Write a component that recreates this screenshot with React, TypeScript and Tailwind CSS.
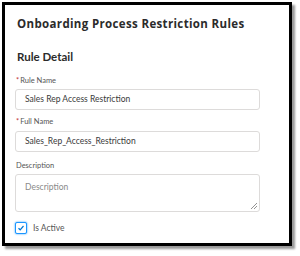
import React from "react";

export default function App() {
  const font = { fontFamily: "Lato, 'Open Sans', sans-serif" };
  const head = { fontFamily: "'Open Sans', Lato, sans-serif" };
  return (
    <div className="w-[300px] h-[256px] bg-white pt-[2px] pl-[2px]" style={font}>
      <div className="w-[290px] h-[244px] border-[3px] border-black bg-white shadow-[3px_3px_2px_#9a9a9a] pl-[10px] flex flex-col">
        <div className="mt-[12px] ml-[2px] h-[14px] leading-[14px] text-[11.5px] tracking-[0.35px] font-bold text-[#2b2b2b] whitespace-nowrap" style={head}>
          Onboarding Process Restriction Rules
        </div>
        <div className="mt-[18px] ml-[2px] h-[16px] leading-[16px] text-[11.5px] font-bold text-[#2b2b2b]">
          Rule Detail
        </div>
        <div className="mt-[11px] ml-[1px] h-[10px] leading-[10px] text-[7.5px] text-[#555]">
          <span className="text-[#c23934] mr-[1px]">*</span>Rule Name
        </div>
        <div className="mt-[3px] w-[245px] h-[21px] border border-[#dddbda] rounded-[3px] pl-[9px] flex items-center text-[8.5px] text-[#3a3a3a]">
          Sales Rep Access Restriction
        </div>
        <div className="mt-[7px] ml-[1px] h-[10px] leading-[10px] text-[7.5px] text-[#555]">
          <span className="text-[#c23934] mr-[1px]">*</span>Full Name
        </div>
        <div className="mt-[4px] w-[245px] h-[21px] border border-[#dddbda] rounded-[3px] pl-[9px] flex items-center text-[8.5px] text-[#3a3a3a]">
          Sales_Rep_Access_Restriction
        </div>
        <div className="mt-[9px] ml-[1px] h-[10px] leading-[10px] text-[7.5px] text-[#555]">
          Description
        </div>
        <div className="relative mt-[3px] w-[245px] h-[38px] border border-[#dddbda] rounded-[3px] pl-[9px] pt-[6px] text-[8.5px] leading-[12px] text-[#8a8a8a]">
          Description
          <svg className="absolute right-[1px] bottom-[1px]" width="8" height="8" viewBox="0 0 8 8">
            <path d="M7 1 L1 7 M7 4 L4 7" stroke="#777" strokeWidth="0.8" />
          </svg>
        </div>
        <div className="mt-[10px] flex items-center h-[12px]">
          <div className="w-[12px] h-[12px] border border-[#1b96ff] rounded-[2px] bg-white flex items-center justify-center shadow-[0_0_2px_#1b96ff]">
            <svg width="8" height="8" viewBox="0 0 8 8">
              <path d="M1.5 4.2 L3.2 5.8 L6.5 2" stroke="#0176d3" strokeWidth="1.2" fill="none" />
            </svg>
          </div>
          <span className="ml-[6px] text-[8.5px] text-[#555]">Is Active</span>
        </div>
      </div>
    </div>
  );
}
